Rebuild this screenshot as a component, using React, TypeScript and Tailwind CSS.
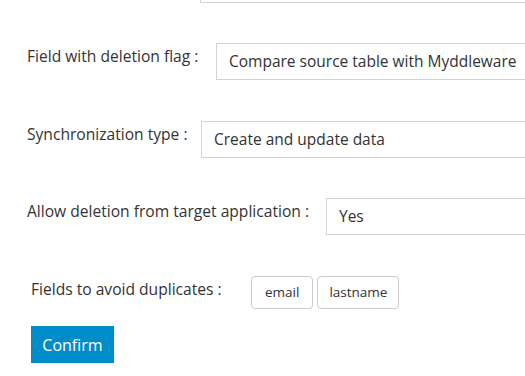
import React from 'react';

const FONT = "font-['Open_Sans','Noto_Sans',sans-serif]";

function Row({ label, value, labelWidth, top }: { label: string; value: string; labelWidth: string; top: string }) {
    return (
        <div className={`flex items-start ${top}`}>
            <label className={`${labelWidth} pl-[27px] pt-[2px] text-[15.6px] leading-[22px] text-[#333] whitespace-nowrap shrink-0`}>
                {label}
            </label>
            <div className="h-[37px] w-[420px] shrink-0 border border-[#ced4da] bg-white flex items-center pl-[12px] text-[15.5px] text-[#333] whitespace-nowrap">
                {value}
            </div>
        </div>
    );
}

export default function App() {
    return (
        <div className={`w-[525px] h-[376px] overflow-hidden bg-white ${FONT}`}>
            {/* tail of the previous input */}
            <div className="ml-[200px] h-[3px] w-[400px] border-l border-b border-[#ced4da]" />

            <Row label="Field with deletion flag :" value="Compare source table with Myddleware" labelWidth="w-[216px]" top="mt-[40px]" />
            <Row label="Synchronization type :" value="Create and update data" labelWidth="w-[201px]" top="mt-[41px]" />
            <Row label="Allow deletion from target application :" value="Yes" labelWidth="w-[326px]" top="mt-[40px]" />

            <div className="flex items-start mt-[41px]">
                <label className="pl-[31px] pt-[2px] text-[15.6px] leading-[22px] text-[#333] whitespace-nowrap w-[251px] shrink-0">
                    Fields to avoid duplicates :
                </label>
                <div className="flex gap-[4px]">
                    <button className="h-[33px] px-[13px] border border-[#ccc] rounded-[4px] bg-white text-[13.5px] text-[#333]">
                        email
                    </button>
                    <button className="h-[33px] px-[11px] border border-[#ccc] rounded-[4px] bg-white text-[13.5px] text-[#333]">
                        lastname
                    </button>
                </div>
            </div>

            <button className="ml-[31px] mt-[17px] h-[37px] w-[83px] bg-[#008cc8] text-white text-[16px]">
                Confirm
            </button>
        </div>
    );
}
